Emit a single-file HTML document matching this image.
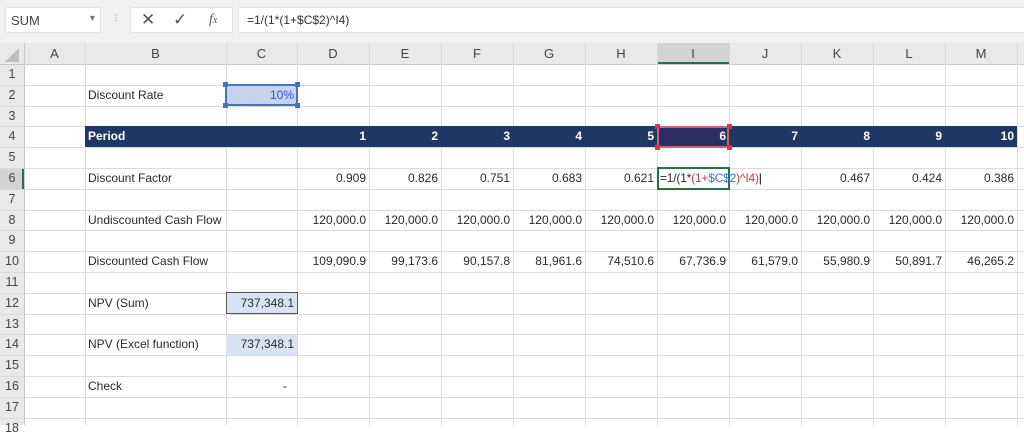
<!DOCTYPE html>
<html><head><meta charset="utf-8"><style>
*{box-sizing:border-box;margin:0;padding:0}
body{width:1024px;height:425px;overflow:hidden;background:#fff;font-family:"Liberation Sans",Arial,sans-serif;font-size:12px;color:#2a2a2a;position:relative}
.tb{position:absolute;left:0;top:0;width:1024px;height:43px;background:#f1f1f1}
.box{position:absolute;background:#fff;border:1px solid #e2e2e2}
.abs{position:absolute}
.vl{position:absolute;top:43px;width:1px;height:382px;background:#dadada}
.hl{position:absolute;left:0;width:1024px;height:1px;background:#dadada}
.ch{position:absolute;top:43px;height:21px;text-align:center;line-height:21px;color:#444;font-size:13px}
.rh{position:absolute;left:0;width:24px;text-align:center;color:#444;font-size:12.5px;height:20.8px;line-height:21px}
.c{position:absolute;height:20.8px;line-height:21px;white-space:nowrap;padding:0 3px}
.r{text-align:right}
.w{color:#fff;font-weight:bold}
</style></head><body>
<div class="tb"></div>
<div class="box" style="left:5px;top:7px;width:96px;height:26px"></div>
<div class="abs" style="left:11px;top:13px;color:#444;font-size:13px">SUM</div>
<div class="abs" style="left:88px;top:13px;color:#777;font-size:9px">▼</div>
<div class="abs" style="left:114px;top:11px;color:#bbb;font-size:12px">⁝</div>
<div class="box" style="left:130px;top:7px;width:103px;height:26px"></div>
<div class="abs" style="left:141px;top:10px;color:#555;font-size:17px">✕</div>
<div class="abs" style="left:173px;top:10px;color:#555;font-size:17px">✓</div>
<div class="abs" style="left:209px;top:12px;color:#555;font-style:italic;font-family:'Liberation Serif',serif;font-size:14px">f<span style="font-size:10px">x</span></div>
<div class="box" style="left:238px;top:7px;width:790px;height:26px"></div>
<div class="abs" style="left:247px;top:13px;color:#333">=1/(1*(1+$C$2)^I4)</div>

<div class="abs" style="left:0;top:43px;width:1024px;height:21px;background:#e9e9e9"></div>
<div class="abs" style="left:0;top:64px;width:24px;height:361px;background:#e9e9e9"></div>
<div class="abs" style="left:657px;top:43px;width:72px;height:21px;background:#d3d3d3;border-bottom:2px solid #217346"></div>
<div class="abs" style="left:0;top:168px;width:24px;height:20.8px;background:#d3d3d3;border-right:2px solid #217346"></div>
<div class="abs" style="left:5px;top:48px;width:0;height:0;border-left:14px solid transparent;border-bottom:14px solid #bdbdbd"></div>

<div class="hl" style="top:64px;background:#c8c8c8"></div>
<div class="hl" style="top:84.8px"></div><div class="hl" style="top:105.6px"></div><div class="hl" style="top:126.4px"></div><div class="hl" style="top:147.2px"></div><div class="hl" style="top:168px"></div><div class="hl" style="top:188.8px"></div><div class="hl" style="top:209.6px"></div><div class="hl" style="top:230.4px"></div><div class="hl" style="top:251.2px"></div><div class="hl" style="top:272px"></div><div class="hl" style="top:292.8px"></div><div class="hl" style="top:313.6px"></div><div class="hl" style="top:334.4px"></div><div class="hl" style="top:355.2px"></div><div class="hl" style="top:376px"></div><div class="hl" style="top:396.8px"></div><div class="hl" style="top:417.6px"></div>
<div class="vl" style="left:24px;background:#c8c8c8"></div><div class="vl" style="left:85px"></div><div class="vl" style="left:226px"></div><div class="vl" style="left:297px"></div><div class="vl" style="left:369px"></div><div class="vl" style="left:441px"></div><div class="vl" style="left:513px"></div><div class="vl" style="left:585px"></div><div class="vl" style="left:657px"></div><div class="vl" style="left:729px"></div><div class="vl" style="left:801px"></div><div class="vl" style="left:873px"></div><div class="vl" style="left:945px"></div><div class="vl" style="left:1017px"></div>

<div class="ch" style="left:24px;width:61px">A</div><div class="ch" style="left:85px;width:141px">B</div><div class="ch" style="left:226px;width:71px">C</div><div class="ch" style="left:297px;width:72px">D</div><div class="ch" style="left:369px;width:72px">E</div><div class="ch" style="left:441px;width:72px">F</div><div class="ch" style="left:513px;width:72px">G</div><div class="ch" style="left:585px;width:72px">H</div><div class="ch" style="left:657px;width:72px">I</div><div class="ch" style="left:729px;width:72px">J</div><div class="ch" style="left:801px;width:72px">K</div><div class="ch" style="left:873px;width:72px">L</div><div class="ch" style="left:945px;width:72px">M</div>

<div class="rh" style="top:64px">1</div><div class="rh" style="top:84.8px">2</div><div class="rh" style="top:105.6px">3</div><div class="rh" style="top:126.4px">4</div><div class="rh" style="top:147.2px">5</div><div class="rh" style="top:168px">6</div><div class="rh" style="top:188.8px">7</div><div class="rh" style="top:209.6px">8</div><div class="rh" style="top:230.4px">9</div><div class="rh" style="top:251.2px">10</div><div class="rh" style="top:272px">11</div><div class="rh" style="top:292.8px">12</div><div class="rh" style="top:313.6px">13</div><div class="rh" style="top:334.4px">14</div><div class="rh" style="top:355.2px">15</div><div class="rh" style="top:376px">16</div><div class="rh" style="top:396.8px">17</div><div class="rh" style="top:417.6px">18</div>

<div class="c" style="left:85px;top:84.8px">Discount Rate</div>
<div class="abs" style="left:225px;top:84px;width:73px;height:22px;background:#c5d3ef;border:2px solid #4472c4"></div>
<div class="c r" style="left:226px;top:84.8px;width:71px;color:#3b4fc8">10%</div>
<div class="abs" style="left:223px;top:82px;width:5px;height:5px;background:#4472c4"></div><div class="abs" style="left:295px;top:82px;width:5px;height:5px;background:#4472c4"></div><div class="abs" style="left:223px;top:103px;width:5px;height:5px;background:#4472c4"></div><div class="abs" style="left:295px;top:103px;width:5px;height:5px;background:#4472c4"></div>

<div class="abs" style="left:85px;top:126.4px;width:932px;height:21px;background:#203764"></div>
<div class="c w" style="left:85px;top:126.4px">Period</div>
<div class="c w r" style="left:297px;top:126.4px;width:72px">1</div><div class="c w r" style="left:369px;top:126.4px;width:72px">2</div><div class="c w r" style="left:441px;top:126.4px;width:72px">3</div><div class="c w r" style="left:513px;top:126.4px;width:72px">4</div><div class="c w r" style="left:585px;top:126.4px;width:72px">5</div>
<div class="abs" style="left:657px;top:126px;width:72px;height:22px;background:#2b2f66;border:2px solid #d0646c"></div>
<div class="c w r" style="left:657px;top:126.4px;width:72px">6</div>
<div class="abs" style="left:655px;top:124px;width:5px;height:5px;background:#c0404a"></div><div class="abs" style="left:727px;top:124px;width:5px;height:5px;background:#c0404a"></div><div class="abs" style="left:655px;top:145px;width:5px;height:5px;background:#c0404a"></div><div class="abs" style="left:727px;top:145px;width:5px;height:5px;background:#c0404a"></div>
<div class="c w r" style="left:729px;top:126.4px;width:72px">7</div><div class="c w r" style="left:801px;top:126.4px;width:72px">8</div><div class="c w r" style="left:873px;top:126.4px;width:72px">9</div><div class="c w r" style="left:945px;top:126.4px;width:72px">10</div>

<div class="c" style="left:85px;top:168px">Discount Factor</div>
<div class="c r" style="left:297px;top:168px;width:72px">0.909</div><div class="c r" style="left:369px;top:168px;width:72px">0.826</div><div class="c r" style="left:441px;top:168px;width:72px">0.751</div><div class="c r" style="left:513px;top:168px;width:72px">0.683</div><div class="c r" style="left:585px;top:168px;width:72px">0.621</div>
<div class="abs" style="left:657px;top:168.5px;width:115px;height:20px;background:#fff"></div>
<div class="abs" style="left:657px;top:167px;width:73px;height:23px;border:2px solid #217346;border-right:none"></div>
<div class="abs" style="left:728px;top:167px;width:2px;height:23px;background:#217346"></div>
<div class="c" style="left:657px;top:168px;padding-left:3px;letter-spacing:-0.2px">=1/(1*<span style="color:#c04050">(1+</span><span style="color:#3b6fd0">$C$2</span><span style="color:#c04050">)^I4)</span><span style="color:#000">|</span></div>
<div class="c r" style="left:801px;top:168px;width:72px">0.467</div><div class="c r" style="left:873px;top:168px;width:72px">0.424</div><div class="c r" style="left:945px;top:168px;width:72px">0.386</div>

<div class="c" style="left:85px;top:209.6px">Undiscounted Cash Flow</div>
<div class="c r" style="left:297px;top:209.6px;width:72px">120,000.0</div><div class="c r" style="left:369px;top:209.6px;width:72px">120,000.0</div><div class="c r" style="left:441px;top:209.6px;width:72px">120,000.0</div><div class="c r" style="left:513px;top:209.6px;width:72px">120,000.0</div><div class="c r" style="left:585px;top:209.6px;width:72px">120,000.0</div><div class="c r" style="left:657px;top:209.6px;width:72px">120,000.0</div><div class="c r" style="left:729px;top:209.6px;width:72px">120,000.0</div><div class="c r" style="left:801px;top:209.6px;width:72px">120,000.0</div><div class="c r" style="left:873px;top:209.6px;width:72px">120,000.0</div><div class="c r" style="left:945px;top:209.6px;width:72px">120,000.0</div>

<div class="c" style="left:85px;top:251.2px">Discounted Cash Flow</div>
<div class="c r" style="left:297px;top:251.2px;width:72px">109,090.9</div><div class="c r" style="left:369px;top:251.2px;width:72px">99,173.6</div><div class="c r" style="left:441px;top:251.2px;width:72px">90,157.8</div><div class="c r" style="left:513px;top:251.2px;width:72px">81,961.6</div><div class="c r" style="left:585px;top:251.2px;width:72px">74,510.6</div><div class="c r" style="left:657px;top:251.2px;width:72px">67,736.9</div><div class="c r" style="left:729px;top:251.2px;width:72px">61,579.0</div><div class="c r" style="left:801px;top:251.2px;width:72px">55,980.9</div><div class="c r" style="left:873px;top:251.2px;width:72px">50,891.7</div><div class="c r" style="left:945px;top:251.2px;width:72px">46,265.2</div>

<div class="c" style="left:85px;top:292.8px">NPV (Sum)</div>
<div class="abs" style="left:226px;top:292.3px;width:72px;height:21.5px;background:#dae3f3;border:1px solid #555"></div>
<div class="c r" style="left:226px;top:292.8px;width:71px">737,348.1</div>
<div class="c" style="left:85px;top:334.4px">NPV (Excel function)</div>
<div class="abs" style="left:226px;top:335px;width:71px;height:20px;background:#dae3f3"></div>
<div class="c r" style="left:226px;top:334.4px;width:71px">737,348.1</div>
<div class="c" style="left:85px;top:376px">Check</div>
<div class="c r" style="left:226px;top:376px;width:71px;padding-right:10px">-</div>
</body></html>
